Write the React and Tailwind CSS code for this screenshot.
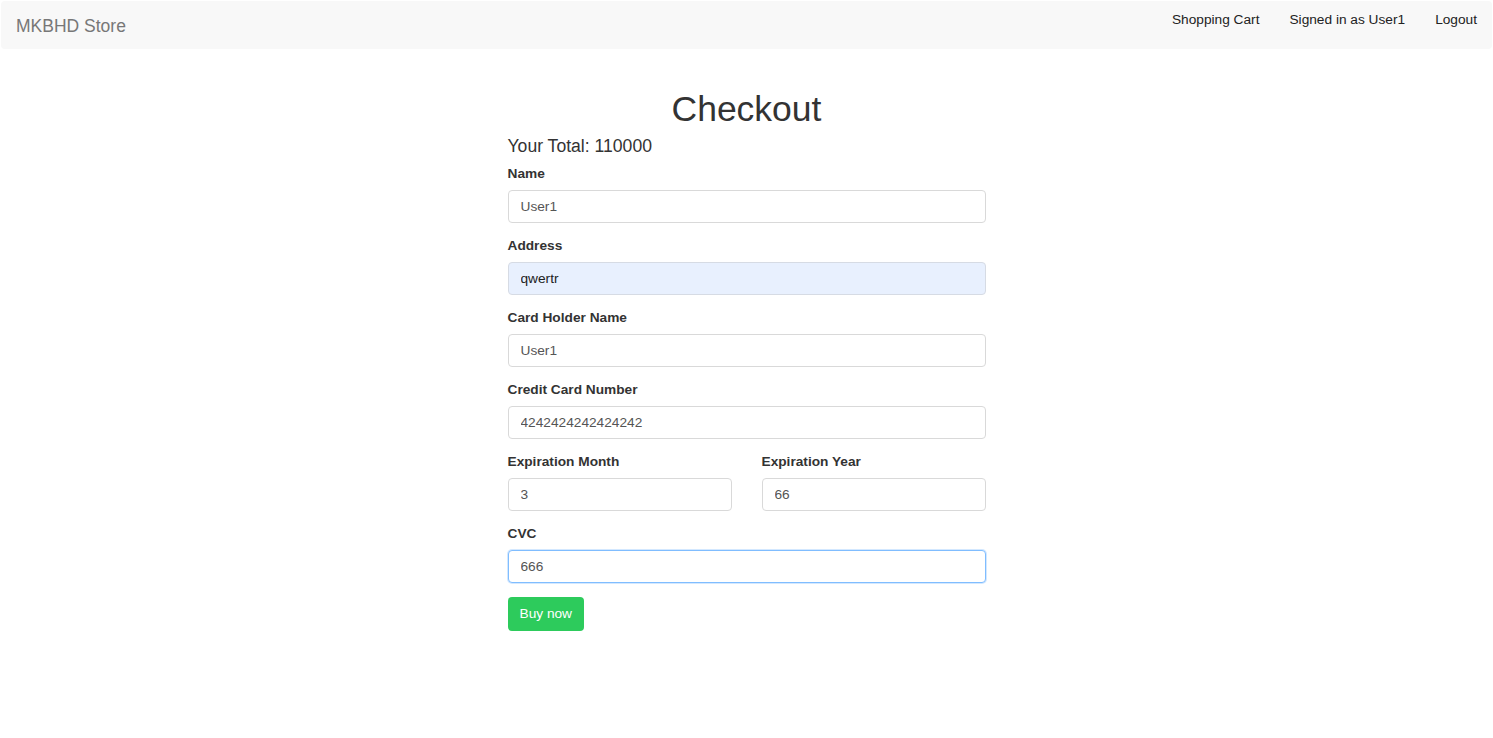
import { useState } from 'react'

/**
 * CHECKOUT PAGE
 * Navbar + checkout form with total, address and card details
 */

function App() {
    const [form, setForm] = useState({
        name: 'User1',
        address: 'qwertr',
        cardHolder: 'User1',
        cardNumber: '4242424242424242',
        expMonth: '3',
        expYear: '66',
        cvc: '666',
    })

    const update = (key) => (e) => setForm({ ...form, [key]: e.target.value })

    return (
        <div className="min-h-screen bg-white text-[#333] text-[13.7px] font-['Liberation_Sans',Arial,sans-serif]">

            {/* ===== NAVBAR ===== */}
            <nav className="mx-px mt-px h-[48px] bg-[#f8f8f8] rounded-[4px] flex justify-between items-start">
                <a href="#" className="pl-[15px] pt-[14px] text-[17.5px] leading-[22px] text-[#777]">MKBHD Store</a>
                <ul className="flex pr-[1px]">
                    <li><a href="#" className="block px-[15px] pt-[9px] leading-[20px] text-[#222]">Shopping Cart</a></li>
                    <li><a href="#" className="block px-[15px] pt-[9px] leading-[20px] text-[#222]">Signed in as User1</a></li>
                    <li><a href="#" className="block pl-[15px] pr-[14px] pt-[9px] leading-[20px] text-[#222]">Logout</a></li>
                </ul>
            </nav>

            <div className="w-[478px] mx-auto">

                {/* ===== PAGE TITLE ===== */}
                <h1 className="mt-[40px] text-center text-[35.5px] leading-[40px] text-[#333]">Checkout</h1>
                <h4 className="mt-[7px] text-[17.6px] leading-[20px] text-[#333]">Your Total: 110000</h4>

                {/* ===== FORM ===== */}
                <form className="mt-[8px]" onSubmit={(e) => e.preventDefault()}>
                    <Field label="Name" value={form.name} onChange={update('name')} />
                    <Field label="Address" value={form.address} onChange={update('address')} autofill />
                    <Field label="Card Holder Name" value={form.cardHolder} onChange={update('cardHolder')} />
                    <Field label="Credit Card Number" value={form.cardNumber} onChange={update('cardNumber')} />

                    <div className="grid grid-cols-2 gap-[30px]">
                        <Field label="Expiration Month" value={form.expMonth} onChange={update('expMonth')} />
                        <Field label="Expiration Year" value={form.expYear} onChange={update('expYear')} />
                    </div>

                    <Field label="CVC" value={form.cvc} onChange={update('cvc')} focused />

                    <button type="submit"
                        className="mt-[1px] h-[34px] px-[12px] rounded-[4px] bg-[#2dcb5c] text-white text-[13.7px] leading-[20px]">
                        Buy now
                    </button>
                </form>
            </div>
        </div>
    )
}

// ===== REUSABLE FIELD =====
function Field({ label, value, onChange, autofill, focused }) {
    return (
        <div className="mb-[13px]">
            <label className="block mb-[6px] font-bold leading-[20px] text-[#333]">{label}</label>
            <input
                type="text"
                value={value}
                onChange={onChange}
                className={`block w-full h-[33px] pl-[12px] pr-[12px] rounded-[4px] border text-[13.7px] outline-none ${
                    autofill ? 'bg-[#e8f0fe] border-[#d6dbe4] text-[#222]' :
                    focused ? 'bg-white border-[#80bdff] shadow-[0_0_0_1px_rgba(128,189,255,0.35)] text-[#555]' :
                    'bg-white border-[#d9d9d9] text-[#555]'
                }`}
            />
        </div>
    )
}

export default App
